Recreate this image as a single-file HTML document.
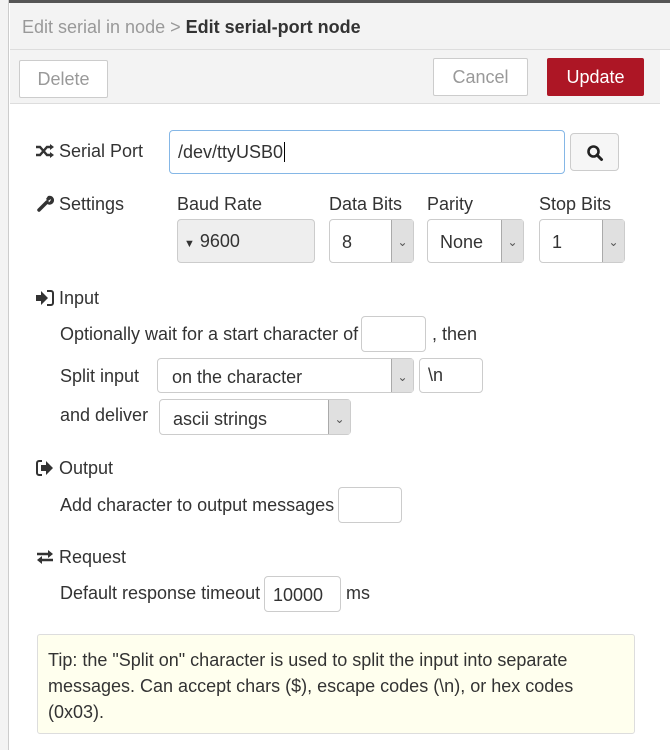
<!DOCTYPE html>
<html><head><style>
*{box-sizing:border-box;margin:0;padding:0}
body{width:670px;height:750px;overflow:hidden;background:#fff;font-family:"Liberation Sans",sans-serif;font-size:18px;color:#333;position:relative}
.abs{position:absolute}
.leftstrip{left:0;top:0;width:9px;height:750px;background:#f3f3f3;border-right:1px solid #ccc}
.topbar{left:0;top:0;width:670px;height:3px;background:#555}
.hdr{left:10px;top:3px;width:660px;height:47px;background:#f3f3f3;border-bottom:1px solid #ddd}
.tb{left:10px;top:50px;width:650px;height:54px;background:#f3f3f3;border-bottom:1px solid #ddd}
.btn{position:absolute;border:1px solid #ccc;background:#fff;color:#999;text-align:center;font-size:18px;border-radius:2px}
.inp{position:absolute;border:1px solid #ccc;border-radius:4px;background:#fff;font-size:18px;color:#333;padding-left:8px}
.sel{position:absolute;border:1px solid #ccc;border-radius:4px;background:#fff;font-size:18px}
.sel .ar{position:absolute;right:0;top:0;bottom:0;width:22px;background:#e0e0e0;border-left:1px solid #aaa;font-size:12px;text-align:center;color:#555}
.t{position:absolute;white-space:nowrap}
.ic{display:inline-block;width:18px;vertical-align:-2px}
</style></head><body>
<div class="abs topbar"></div>
<div class="abs leftstrip"></div>
<div class="abs hdr"></div>
<div class="t" style="left:22px;top:17px;color:#999">Edit serial in node &gt; <b style="color:#333">Edit serial-port node</b></div>
<div class="abs tb"></div>
<div class="btn" style="left:19px;top:60px;width:89px;height:38px;line-height:36px">Delete</div>
<div class="btn" style="left:433px;top:58px;width:95px;height:38px;line-height:36px">Cancel</div>
<div class="btn" style="left:547px;top:58px;width:97px;height:38px;line-height:36px;background:#ad1625;border-color:#ad1625;color:#fff">Update</div>

<div class="t" style="left:36px;top:141px"><svg class="ic" width="18" height="16" viewBox="0 0 18 16"><path d="M0 4h4l7 8h4M0 12h4l7-8h4" fill="none" stroke="#333" stroke-width="2.4"/><path d="M14 1l4 3-4 3zM14 9l4 3-4 3z" fill="#333"/></svg> Serial Port</div>
<div class="inp" style="left:169px;top:130px;width:396px;height:44px;line-height:42px;border-color:#85b7e6">/dev/ttyUSB0<span style="border-left:1px solid #000;margin-left:1px"></span></div>
<div class="btn" style="left:570px;top:133px;width:49px;height:38px;background:#f6f6f6;border-radius:4px;color:#333">
<svg width="18" height="18" viewBox="0 0 18 18" style="margin-top:10px"><circle cx="7.5" cy="7.5" r="5" fill="none" stroke="#222" stroke-width="2.6"/><path d="M11 11l4.5 4.5" stroke="#222" stroke-width="3" stroke-linecap="round"/></svg></div>

<div class="t" style="left:36px;top:194px"><svg class="ic" width="18" height="18" viewBox="0 0 18 18"><path d="M3 16l8-8" stroke="#333" stroke-width="3.5" stroke-linecap="round"/><path d="M10 9a4.5 4.5 0 1 0 2-7l-2 3 2 2 3-2a4.5 4.5 0 0 1-5 4z" fill="#333"/></svg> Settings</div>
<div class="t" style="left:177px;top:194px">Baud Rate</div>
<div class="t" style="left:329px;top:194px">Data Bits</div>
<div class="t" style="left:427px;top:194px">Parity</div>
<div class="t" style="left:539px;top:194px">Stop Bits</div>
<div class="sel" style="left:177px;top:219px;width:138px;height:44px;background:#eee;line-height:42px;padding-left:6px"><span style="font-size:11px">▼</span> 9600</div>
<div class="sel" style="left:329px;top:219px;width:85px;height:44px;line-height:44px;padding-left:12px">8<div class="ar">⌄</div></div>
<div class="sel" style="left:427px;top:219px;width:97px;height:44px;line-height:44px;padding-left:12px">None<div class="ar">⌄</div></div>
<div class="sel" style="left:539px;top:219px;width:86px;height:44px;line-height:44px;padding-left:12px">1<div class="ar">⌄</div></div>

<div class="t" style="left:36px;top:288px"><svg class="ic" width="18" height="16" viewBox="0 0 18 16"><path d="M0 5h5V1l7 7-7 7v-4H0z" fill="#333"/><path d="M11 1h4a2 2 0 0 1 2 2v10a2 2 0 0 1-2 2h-4" fill="none" stroke="#333" stroke-width="2"/></svg> Input</div>
<div class="t" style="left:60px;top:324px">Optionally wait for a start character of</div>
<div class="inp" style="left:361px;top:316px;width:65px;height:36px"></div>
<div class="t" style="left:432px;top:324px">, then</div>
<div class="t" style="left:60px;top:366px">Split input</div>
<div class="sel" style="left:157px;top:358px;width:257px;height:35px;line-height:36px;padding-left:14px">on the character<div class="ar">⌄</div></div>
<div class="inp" style="left:419px;top:358px;width:64px;height:35px;line-height:33px">\n</div>
<div class="t" style="left:60px;top:405px">and deliver</div>
<div class="sel" style="left:159px;top:399px;width:192px;height:36px;line-height:38px;padding-left:13px">ascii strings<div class="ar">⌄</div></div>

<div class="t" style="left:36px;top:458px"><svg class="ic" width="18" height="16" viewBox="0 0 18 16"><path d="M6 1H3a2 2 0 0 0-2 2v10a2 2 0 0 0 2 2h3" fill="none" stroke="#333" stroke-width="2"/><path d="M5 5h5V1l7 7-7 7v-4H5z" fill="#333"/></svg> Output</div>
<div class="t" style="left:60px;top:495px">Add character to output messages</div>
<div class="inp" style="left:338px;top:487px;width:64px;height:36px"></div>

<div class="t" style="left:36px;top:547px"><svg class="ic" width="18" height="16" viewBox="0 0 18 16"><path d="M1 5h13M17 11H4" stroke="#333" stroke-width="2.4"/><path d="M12 1l5 4-5 4zM6 7l-5 4 5 4z" fill="#333"/></svg> Request</div>
<div class="t" style="left:60px;top:583px">Default response timeout</div>
<div class="inp" style="left:264px;top:576px;width:77px;height:36px;line-height:36px">10000</div>
<div class="t" style="left:346px;top:583px">ms</div>

<div class="abs" style="left:37px;top:634px;width:598px;height:100px;background:#ffffee;border:1px solid #ddd;border-radius:3px;padding:12px 10px;line-height:26px;font-size:18px">Tip: the "Split on" character is used to split the input into separate messages. Can accept chars ($), escape codes (\n), or hex codes (0x03).</div>
</body></html>
